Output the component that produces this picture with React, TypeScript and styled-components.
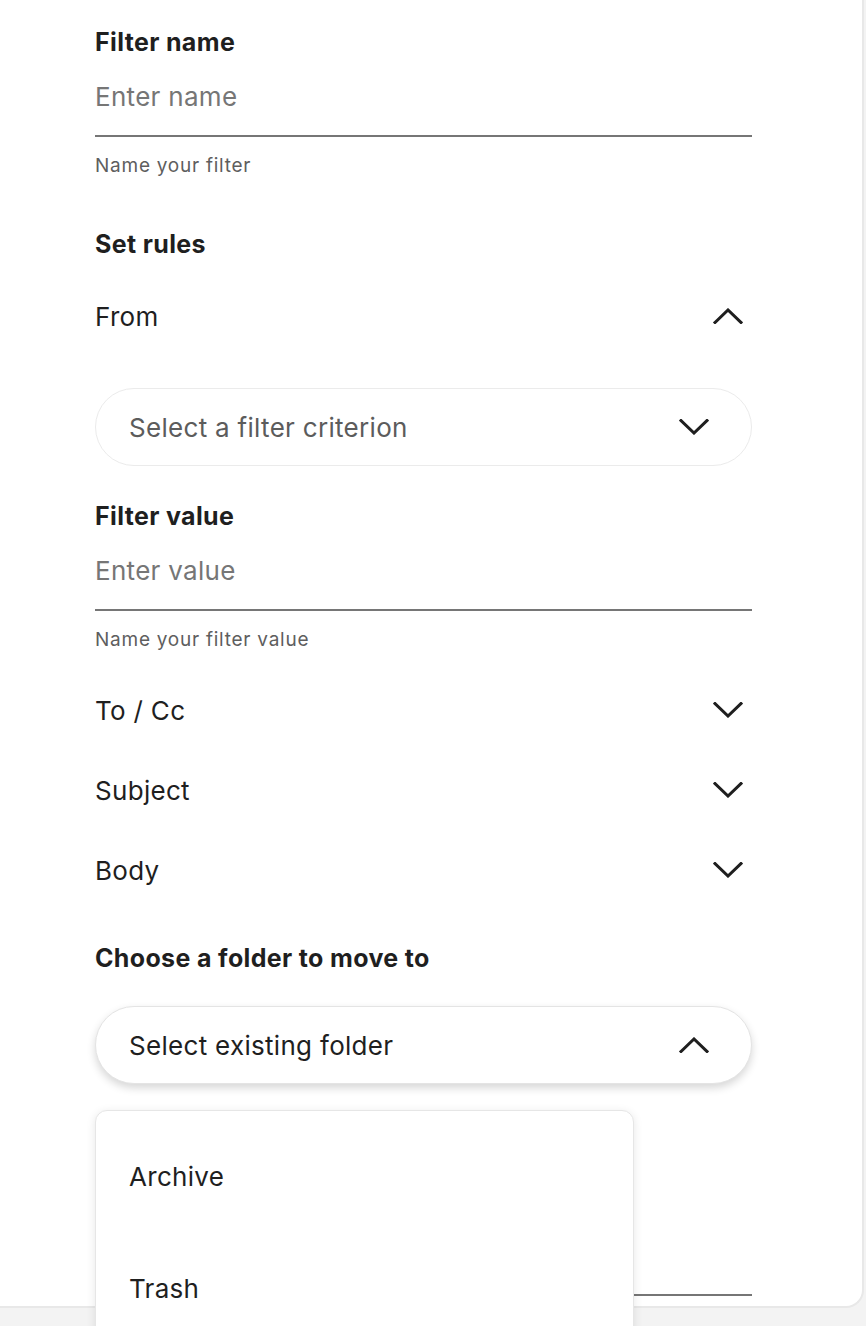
import React from "react";
import styled, { createGlobalStyle, css } from "styled-components";

const GlobalStyle = createGlobalStyle`
  html, body {
    margin: 0;
    padding: 0;
    background: #f3f3f3;
  }
  body {
    font-family: Inter, "Noto Sans", "Liberation Sans", sans-serif;
    color: #1f1f1f;
  }
  * {
    box-sizing: border-box;
  }
`;

const Page = styled.div`
  width: 866px;
  height: 1326px;
  overflow: hidden;
  position: relative;
`;

const Panel = styled.div`
  width: 864px;
  background: #fff;
  border-right: 2px solid #e8e8e8;
  border-bottom: 2px solid #e8e8e8;
  border-bottom-right-radius: 18px;
  padding: 26px 110px 10px 95px;
  position: relative;
`;

const Label = styled.div<{ $gap?: number }>`
  font-size: 25px;
  line-height: 32px;
  font-weight: 700;
  letter-spacing: 0.35px;
  margin-top: ${({ $gap }) => $gap ?? 0}px;
`;

const TextInput = styled.input<{ $gap?: number }>`
  display: block;
  width: 100%;
  margin-top: ${({ $gap }) => $gap ?? 0}px;
  border: none;
  border-bottom: 2px solid #767676;
  outline: none;
  background: transparent;
  font-family: inherit;
  font-size: 26px;
  line-height: 32px;
  letter-spacing: 0.3px;
  color: #1f1f1f;
  padding: 23px 0 22px;
  &::placeholder {
    color: #767676;
  }
`;

const Helper = styled.div`
  margin-top: 17px;
  font-size: 19px;
  line-height: 24px;
  color: #5e5e5e;
  letter-spacing: 0.75px;
`;

const RuleRow = styled.div<{ $gap?: number }>`
  height: 80px;
  display: flex;
  align-items: center;
  justify-content: space-between;
  font-size: 26px;
  letter-spacing: 0.3px;
  margin-top: ${({ $gap }) => $gap ?? 0}px;
`;

const IconBox = styled.span`
  width: 48px;
  height: 48px;
  display: flex;
  align-items: center;
  justify-content: center;
`;

const Select = styled.div<{ $raised?: boolean; $gap?: number }>`
  height: 78px;
  margin-top: ${({ $gap }) => $gap ?? 0}px;
  border-radius: 39px;
  border: 1.5px solid #ebebeb;
  background: #fff;
  display: flex;
  align-items: center;
  justify-content: space-between;
  padding: 0 42px 0 33px;
  font-size: 26px;
  letter-spacing: 0.3px;
  color: #5c5c5c;
  ${({ $raised }) =>
    $raised &&
    css`
      color: #1f1f1f;
      border-color: #e4e4e4;
      box-shadow: 0 4px 8px rgba(0, 0, 0, 0.16);
    `}
`;

const Menu = styled.div`
  position: absolute;
  left: 95px;
  top: 1110px;
  width: 539px;
  height: 260px;
  background: #fff;
  border: 1px solid #e6e6e6;
  border-radius: 12px;
  box-shadow: 0 2px 10px rgba(0, 0, 0, 0.1);
  padding-top: 9px;
  z-index: 2;
`;

const MenuItem = styled.div`
  height: 112px;
  display: flex;
  align-items: center;
  padding-left: 33px;
  font-size: 26px;
  letter-spacing: 0.3px;
  color: #1f1f1f;
`;

const Chevron = ({ up }: { up?: boolean }) => (
  <svg width="30" height="16" viewBox="0 0 30 16" fill="none">
    <path
      d={up ? "M2 14.5 L15 2 L28 14.5" : "M2 1.5 L15 14 L28 1.5"}
      stroke="#1f1f1f"
      strokeWidth="3"
      strokeLinecap="square"
      strokeLinejoin="miter"
    />
  </svg>
);

const rules = ["To / Cc", "Subject", "Body"];

const App = () => {
  return (
    <Page>
      <GlobalStyle />
      <Panel>
        <Label>Filter name</Label>
        <TextInput placeholder="Enter name" />
        <Helper>Name your filter</Helper>

        <Label $gap={50}>Set rules</Label>
        <RuleRow $gap={16}>
          <span>From</span>
          <IconBox>
            <Chevron up />
          </IconBox>
        </RuleRow>

        <Select $gap={32}>
          <span>Select a filter criterion</span>
          <Chevron />
        </Select>

        <Label $gap={34}>Filter value</Label>
        <TextInput placeholder="Enter value" />
        <Helper>Name your filter value</Helper>

        {rules.map((r, i) => (
          <RuleRow key={r} $gap={i === 0 ? 18 : 0}>
            <span>{r}</span>
            <IconBox>
              <Chevron />
            </IconBox>
          </RuleRow>
        ))}

        <Label $gap={32}>Choose a folder to move to</Label>
        <Select $raised $gap={32}>
          <span>Select existing folder</span>
          <Chevron up />
        </Select>

        {/* new-folder field, mostly hidden behind the open menu */}
        <TextInput $gap={133} aria-label="New folder name" />
      </Panel>

      <Menu>
        <MenuItem>Archive</MenuItem>
        <MenuItem>Trash</MenuItem>
      </Menu>
    </Page>
  );
};

export default App;
